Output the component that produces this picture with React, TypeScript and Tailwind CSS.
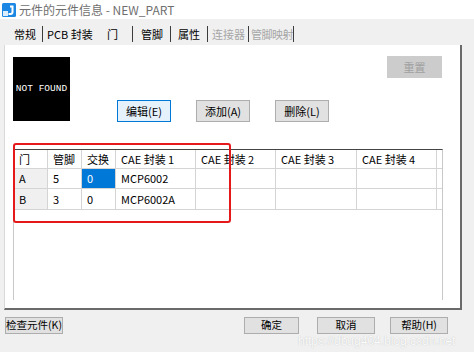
import React from "react";

const cjk = { fontFamily: '"Noto Sans CJK SC", "Noto Sans", sans-serif' };

function Btn({ label, w, focused, disabled, h = 22, size = 11 }: { label: string; w: number; focused?: boolean; disabled?: boolean; h?: number; size?: number }) {
  return (
    <div
      className={
        "shrink-0 whitespace-nowrap flex items-center justify-center border leading-none " +
        (focused
          ? "border-[#0078d7] bg-[#e5f1fb] text-black"
          : disabled
          ? "border-[#cccccc] bg-[#cccccc] text-[#a0a0a0]"
          : "border-[#adadad] bg-[#e1e1e1] text-black")
      }
      style={{ width: w, height: h, fontSize: size }}
    >
      {label}
    </div>
  );
}

const Sep = () => <div className="shrink-0 w-[1px] h-[16px] bg-[#3c3c3c]" />;

export default function App() {
  const cols = "grid grid-cols-[34px_34px_34px_80px_80px_81px_80px_1fr]";
  const cell = "h-full flex items-center pl-[5px] border-r border-[#d4d4d4] text-[11px] text-black whitespace-nowrap";
  return (
    <div className="relative w-[474px] h-[352px] bg-[#f0f0f0] flex flex-col overflow-hidden whitespace-nowrap" style={cjk}>
      {/* title bar */}
      <div className="h-[19px] bg-white flex items-center pl-[2px] gap-[3px]">
        <svg width="14" height="14" viewBox="0 0 14 14" className="shrink-0">
          <rect x="0" y="0" width="14" height="14" rx="1.5" fill="#1d87e4" />
          <rect x="1" y="8" width="5" height="5" fill="#ffffff" opacity="0.85" />
          <path d="M8 2.5h3.5v6.5a3 3 0 0 1-3 3H6.5v-2H8.5a1 1 0 0 0 1-1V4.5H8z" fill="#ffffff" />
        </svg>
        <span className="text-[12px] text-[#6f6f6f] leading-none">元件的元件信息 - NEW_PART</span>
      </div>

      {/* tabs */}
      <div className="h-[26px] pt-[4px] flex items-center pl-[14px] text-[11px] leading-none">
        <div className="shrink-0 w-[28px]">常规</div>
        <Sep />
        <div className="shrink-0 w-[64px] pl-[4px]">PCB 封装</div>
        <div className="shrink-0 w-[25px]">门</div>
        <Sep />
        <div className="shrink-0 w-[37px] pl-[8px]">管脚</div>
        <Sep />
        <div className="shrink-0 w-[36px] pl-[7px]">属性</div>
        <Sep />
        <div className="shrink-0 w-[40px] pl-[4px] text-[#a6a6a6]">连接器</div>
        <Sep />
        <div className="shrink-0 w-[44px] pl-[2px] text-[#a6a6a6] tracking-[-0.5px]">管脚映射</div>
        <Sep />
      </div>

      {/* panel */}
      <div className="relative ml-[4px] w-[458px] h-[265px] bg-white border-l border-l-[#d9d9d9] border-r-2 border-r-[#6a6a6a] border-b-2 border-b-[#6a6a6a] flex flex-col">
        <div className="flex items-start">
          <div className="ml-[8px] mt-[12px] w-[57px] h-[64px] bg-black flex items-center justify-center">
            <span className="text-white text-[9.5px] leading-none" style={{ fontFamily: '"Liberation Mono", monospace' }}>
              NOT FOUND
            </span>
          </div>
          <div className="ml-[47px] mt-[55px] flex gap-[25px]">
            <Btn label="编辑(E)" w={54} focused />
            <Btn label="添加(A)" w={54} />
            <Btn label="删除(L)" w={54} />
          </div>
          <div className="ml-auto mr-[18px] mt-[11px]">
            <Btn label="重置" w={55} disabled />
          </div>
        </div>

        {/* table */}
        <div className="ml-[8px] mt-[27px] w-[430px] flex-1 mb-[8px] border-l border-r border-[#c8c8c8] border-t border-t-[#444444] flex flex-col">
          <div className={cols + " h-[19px] border-b border-[#d4d4d4]"}>
            <div className={cell}>门</div>
            <div className={cell}>管脚</div>
            <div className={cell}>交换</div>
            <div className={cell}>CAE 封装 1</div>
            <div className={cell}>CAE 封装 2</div>
            <div className={cell}>CAE 封装 3</div>
            <div className={cell}>CAE 封装 4</div>
            <div className="h-full" />
          </div>
          <div className={cols + " h-[20px] border-b border-[#d4d4d4]"}>
            <div className={cell + " bg-[#f0f0f0]"}>A</div>
            <div className={cell}>5</div>
            <div className={cell + " bg-[#0078d7] text-white"}>0</div>
            <div className={cell}>MCP6002</div>
            <div className={cell} />
            <div className={cell} />
            <div className={cell} />
            <div className="h-full" />
          </div>
          <div className={cols + " h-[21px] border-b border-[#d4d4d4]"}>
            <div className={cell + " bg-[#f0f0f0]"}>B</div>
            <div className={cell}>3</div>
            <div className={cell}>0</div>
            <div className={cell}>MCP6002A</div>
            <div className={cell} />
            <div className={cell} />
            <div className={cell} />
            <div className="h-full" />
          </div>
        </div>

        {/* red annotation box */}
        <div className="absolute left-[8px] top-[98px] w-[218px] h-[80px] border-2 border-[#e5191b] rounded-[3px]" />
      </div>

      {/* bottom buttons */}
      <div className="flex items-start mt-[7px]">
        <div className="ml-[5px]">
          <Btn label="检查元件(K)" w={58} h={17} size={10.5} />
        </div>
        <div className="ml-auto mr-[26px] flex">
          <Btn label="确定" w={55} h={17} size={10.5} />
          <div className="ml-[18px]">
            <Btn label="取消" w={58} h={17} size={10.5} />
          </div>
          <div className="ml-[15px]">
            <Btn label="帮助(H)" w={58} h={17} size={10.5} />
          </div>
        </div>
      </div>

      {/* watermark */}
      <div
        className="absolute left-[298px] top-[335px] text-[12px] text-[#fbfbfb] leading-none [text-shadow:0_0_1px_#b8b8b8]"
        style={{ fontFamily: '"Liberation Sans", sans-serif' }}
      >
        https://dbug404.blog.csdn.net
      </div>
    </div>
  );
}
